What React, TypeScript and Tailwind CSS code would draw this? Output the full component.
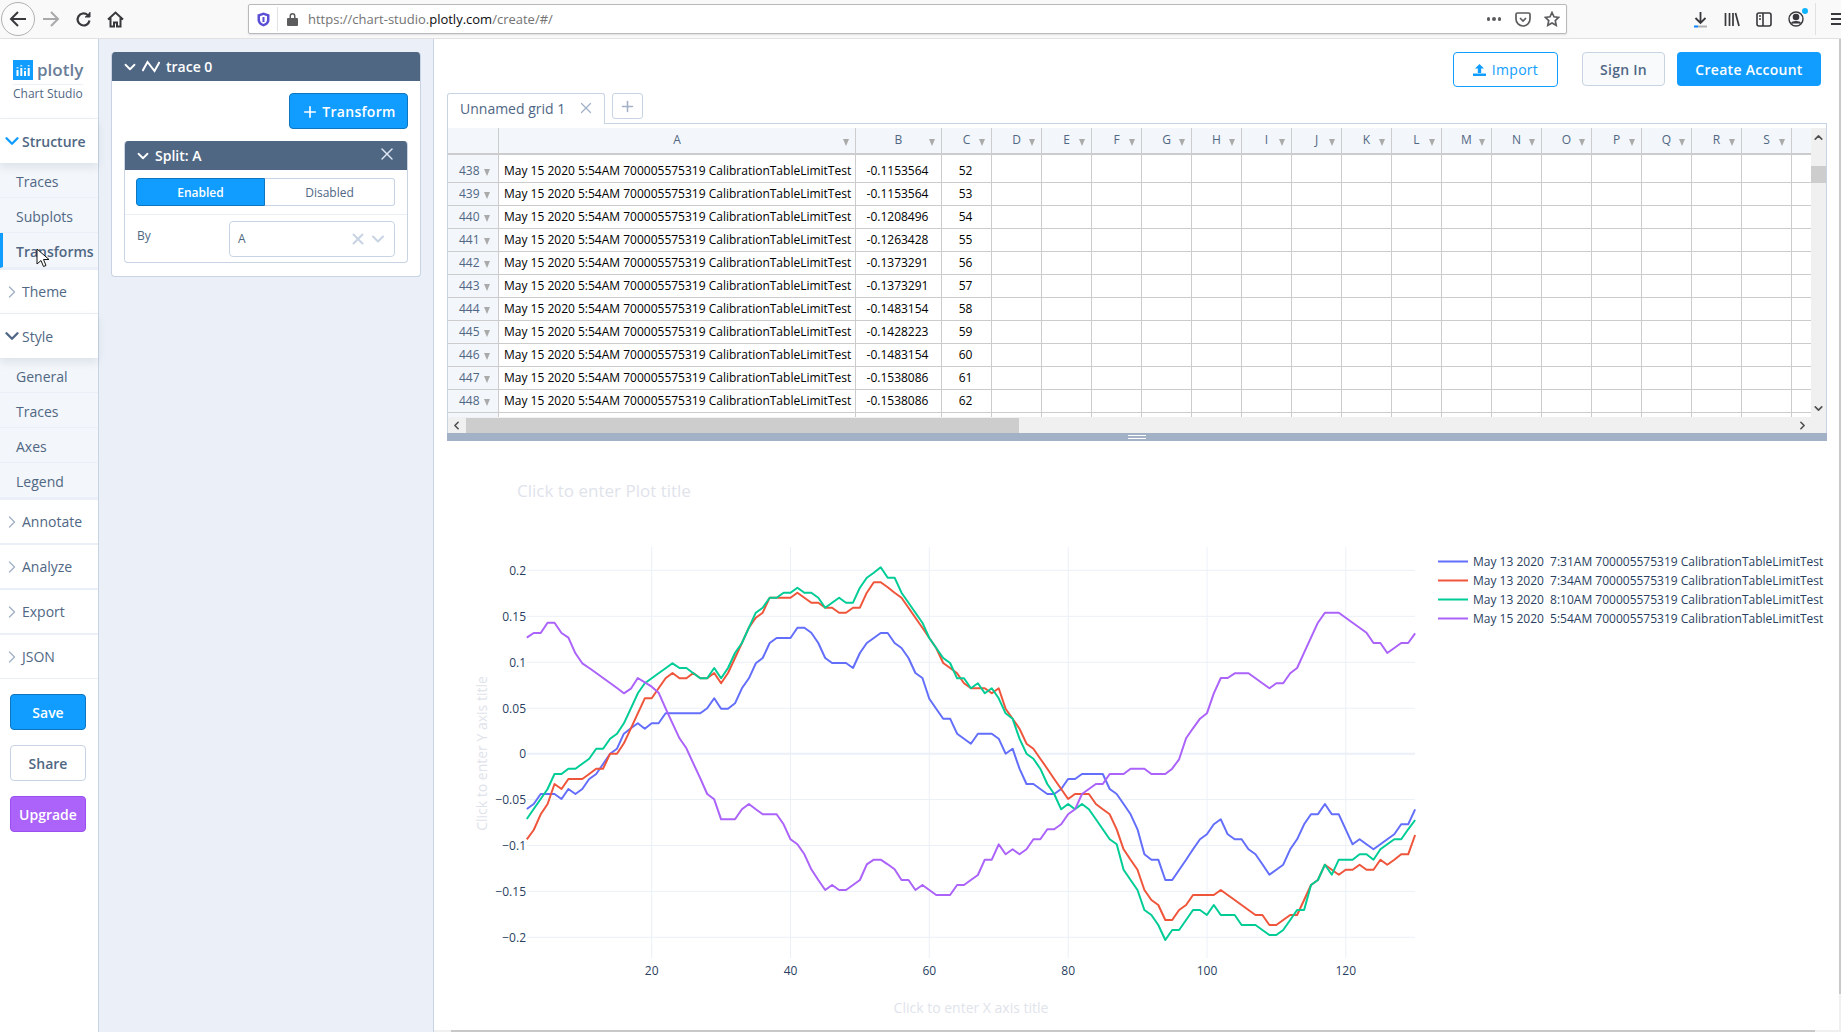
import { ChevronDown, ChevronRight, ChevronUp, ChevronLeft, X, Plus } from 'lucide-react';

const blueLine = [837,822,792,792,792,807,777,792,777,747,732,702,671,656,611,595,580,596,580,580,550,550,550,550,550,550,535,505,536,536,520,475,445,400,384,339,324,324,324,293,293,308,339,384,399,399,399,414,369,339,324,309,309,339,354,384,429,444,506,536,566,566,611,626,641,611,611,611,626,671,656,716,762,762,777,792,792,777,747,747,732,732,732,732,777,792,822,853,898,973,989,989,1050,1050,1020,989,958,928,913,883,868,913,928,928,958,973,1003,1034,1019,1004,958,928,883,853,853,822,853,853,898,943,928,943,958,943,928,913,883,883,838];
const redLine = [928,900,853,822,762,777,747,747,747,732,716,716,671,671,640,595,550,505,505,475,445,429,445,445,429,445,445,429,460,429,384,339,293,263,248,203,203,203,203,188,203,218,218,233,233,248,248,233,233,188,157,157,172,188,203,233,263,293,324,354,399,414,430,460,475,475,475,490,475,536,566,596,641,656,686,716,747,777,807,792,792,792,822,838,853,898,958,989,1019,1080,1110,1125,1170,1170,1140,1125,1095,1095,1095,1095,1080,1095,1110,1125,1140,1155,1155,1185,1185,1170,1155,1155,1110,1065,1050,1004,1019,1034,1019,1019,1004,1019,1019,989,1004,989,973,973,915];
const greenLine = [867,837,807,777,732,732,716,716,701,686,656,656,626,611,580,535,490,460,445,430,415,400,414,414,430,445,445,414,445,414,369,339,293,248,233,203,203,188,188,173,188,188,203,233,218,203,218,218,173,143,128,112,143,143,188,218,248,278,324,354,384,399,445,445,475,460,490,475,505,550,566,626,671,686,716,762,792,838,822,838,822,838,868,898,928,943,1019,1050,1080,1140,1155,1185,1230,1200,1200,1170,1140,1140,1155,1125,1155,1155,1155,1185,1185,1185,1200,1215,1215,1200,1170,1140,1140,1065,1050,1004,1034,989,989,989,973,973,989,958,943,928,928,898,870];
const purpleLine = [323,309,309,278,278,309,323,370,400,414,429,444,459,474,490,476,444,457,470,488,535,580,625,655,700,745,792,808,868,868,868,838,822,838,853,853,853,883,928,943,973,1018,1050,1080,1065,1080,1080,1065,1050,1003,989,989,1003,1018,1050,1050,1080,1065,1080,1095,1095,1095,1065,1065,1050,1035,989,989,943,973,958,973,958,928,928,898,898,883,853,838,792,777,762,762,732,732,732,716,716,716,732,732,732,716,688,625,595,566,550,490,444,444,430,430,430,445,460,475,460,460,430,414,368,323,278,248,248,248,263,278,293,308,339,339,369,354,339,339,310];

const series = [
  { color: '#636efa', data: blueLine, label: 'May 13 2020  7:31AM 700005575319 CalibrationTableLimitTest' },
  { color: '#ef553b', data: redLine, label: 'May 13 2020  7:34AM 700005575319 CalibrationTableLimitTest' },
  { color: '#00cc96', data: greenLine, label: 'May 13 2020  8:10AM 700005575319 CalibrationTableLimitTest' },
  { color: '#ab63fa', data: purpleLine, label: 'May 15 2020  5:54AM 700005575319 CalibrationTableLimitTest' },
];

const gridRows = [
  ['438', '-0.1153564', '52'],
  ['439', '-0.1153564', '53'],
  ['440', '-0.1208496', '54'],
  ['441', '-0.1263428', '55'],
  ['442', '-0.1373291', '56'],
  ['443', '-0.1373291', '57'],
  ['444', '-0.1483154', '58'],
  ['445', '-0.1428223', '59'],
  ['446', '-0.1483154', '60'],
  ['447', '-0.1538086', '61'],
  ['448', '-0.1538086', '62'],
];

const emptyCols = ['D', 'E', 'F', 'G', 'H', 'I', 'J', 'K', 'L', 'M', 'N', 'O', 'P', 'Q', 'R', 'S'];

const yTicks = [
  { v: '0.2', y: 570.3 },
  { v: '0.15', y: 616.3 },
  { v: '0.1', y: 662.3 },
  { v: '0.05', y: 708.2 },
  { v: '0', y: 753.7 },
  { v: '−0.05', y: 799.6 },
  { v: '−0.1', y: 845.5 },
  { v: '−0.15', y: 891.4 },
  { v: '−0.2', y: 937.3 },
];
const xTicks = [
  { v: '20', x: 651.7 },
  { v: '40', x: 790.5 },
  { v: '60', x: 929.3 },
  { v: '80', x: 1068.2 },
  { v: '100', x: 1207 },
  { v: '120', x: 1345.8 },
];

function linePoints(data: number[]) {
  return data.map((y, i) => `${(651.7 + (i - 18) * 6.94).toFixed(1)},${(530 + y / 3).toFixed(1)}`).join(' ');
}

function Caret() {
  return <span className="inline-block w-0 h-0 border-x-[3.5px] border-x-transparent border-t-[7px] border-t-[#aaaaaa]" />;
}

function SideHeader({ label, open, active, bold, tight }: { label: string; open?: boolean; active?: boolean; bold?: boolean; tight?: boolean }) {
  return (
    <div className={`flex items-center bg-white text-[14px] text-[#506784] ${open ? 'h-[44px] relative shadow-[0_4px_8px_rgba(80,103,132,0.14)]' : tight ? 'h-[44px] border-b border-[#ebf0f8]' : 'h-[45px] border-b-2 border-[#ebf0f8]'} ${bold ? 'font-semibold' : ''}`}>
      <span className="w-[22px] flex justify-center pl-[1px]">
        {open ? (
          <ChevronDown size={22} strokeWidth={2.6} className={`shrink-0 ${active ? 'text-[#119dff]' : 'text-[#506784]'}`} />
        ) : (
          <ChevronRight size={20} strokeWidth={1.6} className="shrink-0 text-[#a2b1c6]" />
        )}
      </span>
      {label}
    </div>
  );
}

function SideItem({ label, active }: { label: string; active?: boolean }) {
  return (
    <div className={`h-[35px] flex items-center pt-[2px] pl-4 text-[14px] text-[#506784] bg-[#f3f6fa] border-b border-[#ebf0f8] ${active ? 'border-l-[3px] border-l-[#119dff] pl-[13px] font-semibold' : ''}`}>
      {label}
    </div>
  );
}

function BrowserBar() {
  return (
    <div className="h-[39px] flex items-center bg-[#f9f9fa] border-b border-[#e1e1e2] shrink-0 text-[#4a4a4f]">
      <div className="ml-[1px] w-[34px] h-[34px] rounded-full border border-[#b1b1b3] bg-[#fbfbfb] flex items-center justify-center shrink-0">
        <svg width="18" height="18" viewBox="0 0 18 18" fill="none" stroke="#38383d" strokeWidth="2"><path d="M17 9H2M9 2 2 9l7 7" /></svg>
      </div>
      <svg className="ml-[7px] shrink-0" width="18" height="18" viewBox="0 0 18 18" fill="none" stroke="#a9a9ab" strokeWidth="2"><path d="M1 9h15M9 2l7 7-7 7" /></svg>
      <svg className="ml-[15px] shrink-0" width="17" height="17" viewBox="0 0 17 17" fill="none" stroke="#38383d" strokeWidth="2.2"><path d="M14.5 9.5A6 6 0 1 1 12.6 4" /><path d="M15 1v5h-5" fill="#38383d" strokeWidth="1" /></svg>
      <svg className="ml-[15px] shrink-0" width="17" height="17" viewBox="0 0 17 17" fill="none" stroke="#38383d" strokeWidth="2"><path d="M1 8.5 8.5 1.5 16 8.5M3.5 7v8.5h3.5v-4h3v4h3.500V7" /></svg>
      <div className="ml-[124px] w-[1319px] h-[30px] shrink-0 bg-white border border-[#b9b9bb] rounded-[2px] flex items-center shadow-[0_1px_2px_rgba(0,0,0,0.1)]">
        <svg className="ml-[8px]" width="13" height="15" viewBox="0 0 13 15"><path d="M6.500 .5 12.500 2.500V8c0 3.500-3 5.500-6 6.500-3-1-6-3-6-6.500V2.500Z" fill="#5b4fd6" /><path d="M6.500 3 10 4.200V8c0 2-1.700 3.300-3.500 4-1.800-.7-3.500-2-3.500-4V4.200Z" fill="#fff" /><rect x="5.500" y="5" width="2" height="5" fill="#5b4fd6" /></svg>
        <span className="ml-[7px] w-px h-[24px] bg-[#e1e1e2]" />
        <svg className="ml-[8px]" width="13" height="14" viewBox="0 0 13 14" fill="#5c5c5f"><path d="M3.500 6V4a3 3 0 0 1 6 0v2H8V4a1.500 1.500 0 0 0-3 0v2Z" /><rect x="1" y="6" width="11" height="8" rx="1" /></svg>
        <span className="ml-[9px] pt-[1px] text-[13px] text-[#737373]">
          https://chart-studio.<span className="text-[#0c0c0d]">plotly.com</span>/create/#/
        </span>
        <div className="ml-auto flex items-center gap-[13px] pr-[6px]">
          <span className="flex gap-[2px] mr-[1px]">
            <span className="w-[3.500px] h-[3.500px] rounded-full bg-[#5c5c5f]" />
            <span className="w-[3.500px] h-[3.500px] rounded-full bg-[#5c5c5f]" />
            <span className="w-[3.500px] h-[3.500px] rounded-full bg-[#5c5c5f]" />
          </span>
          <svg width="16" height="15" viewBox="0 0 16 15" fill="none" stroke="#5c5c5f" strokeWidth="1.700"><path d="M1 2.500A1.500 1.500 0 0 1 2.500 1h11A1.500 1.500 0 0 1 15 2.500V7a7 7 0 0 1-14 0Z" /><path d="m5 6 3 3 3-3" /></svg>
          <svg width="16" height="16" viewBox="0 0 16 16" fill="none" stroke="#5c5c5f" strokeWidth="1.700"><path d="m8 1.500 2 4.300 4.700.6-3.400 3.200.9 4.700L8 12l-4.200 2.300.9-4.700L1.300 6.400 6 5.800Z" /></svg>
        </div>
      </div>
      <div className="ml-[126px] flex items-center shrink-0">
        <svg width="15" height="17" viewBox="0 0 15 17" fill="none"><path d="M7.500 1v10M2.500 7l5 5 5-5" stroke="#38383d" strokeWidth="1.800" /><path d="M1 15.500h4" stroke="#0a84ff" strokeWidth="2" /><path d="M5 15.500h9" stroke="#b1b1b3" strokeWidth="2" /></svg>
        <svg className="ml-[16px]" width="16" height="15" viewBox="0 0 16 15" fill="none" stroke="#38383d" strokeWidth="1.700"><path d="M1.500 1v13M5.500 1v13M9 1v13M11.500 1l3.500 13" /></svg>
        <svg className="ml-[16px]" width="16" height="15" viewBox="0 0 16 15" fill="none" stroke="#38383d" strokeWidth="1.600"><rect x="1" y="1" width="14" height="13" rx="2" /><path d="M7 1v13" /><path d="M3 4h2M3 7h2" /></svg>
        <div className="relative ml-[16px]">
          <svg width="16" height="16" viewBox="0 0 16 16" fill="none" stroke="#38383d" strokeWidth="1.400"><circle cx="8" cy="8" r="7" /><circle cx="8" cy="6" r="2.600" fill="#38383d" /><path d="M3.500 12.500c1-2.500 8-2.500 9 0" fill="#38383d" /></svg>
          <span className="absolute -top-[3px] -right-[4px] w-[6px] h-[6px] rounded-full bg-[#0fb4ff]" />
        </div>
        <span className="ml-[11px] w-px h-[32px] bg-[#e1e1e2]" />
        <div className="ml-[15px] flex flex-col gap-[3px]">
          <span className="w-[12px] h-[2px] bg-[#38383d]" />
          <span className="w-[12px] h-[2px] bg-[#38383d]" />
          <span className="w-[12px] h-[2px] bg-[#38383d]" />
        </div>
      </div>
    </div>
  );
}

function Sidebar() {
  return (
    <aside className="relative w-[99px] shrink-0 bg-white border-r border-[#c8d4e3] flex flex-col">
      <div className="h-[80px] pt-[21px] pl-[13px] border-b border-[#ebf0f8]">
        <div className="flex items-center w-[70px] h-[20px] border-b border-[#ebf0f8] pb-[4px] box-content">
          <svg width="20" height="20" viewBox="0 0 20 20" className="shrink-0">
            <rect width="20" height="20" fill="#119dff" />
            <g fill="#fff">
              <rect x="3.500" y="10" width="2" height="6" />
              <rect x="7.300" y="8" width="2" height="8" />
              <rect x="11" y="11" width="2" height="5" />
              <rect x="14.700" y="8" width="2" height="8" />
              <rect x="3.500" y="7" width="2" height="1.500" opacity=".7" />
              <rect x="7.300" y="5" width="2" height="1.500" opacity=".7" />
              <rect x="11" y="8" width="2" height="1.500" opacity=".7" />
              <rect x="14.700" y="5" width="2" height="1.500" opacity=".7" />
            </g>
          </svg>
          <span className="ml-[4px] text-[17px] leading-[20px] font-semibold text-[#6b7d97]">plotly</span>
        </div>
        <div className="mt-[1px] text-[12px] leading-[16px] text-[#506784] whitespace-nowrap">Chart Studio</div>
      </div>
      <SideHeader label="Structure" open active bold />
      <SideItem label="Traces" />
      <SideItem label="Subplots" />
      <SideItem label="Transforms" active />
      <div className="h-[2px] bg-[#ebf0f8]" />
      <SideHeader label="Theme" tight />
      <SideHeader label="Style" open />
      <SideItem label="General" />
      <SideItem label="Traces" />
      <SideItem label="Axes" />
      <SideItem label="Legend" />
      <div className="h-[2px] bg-[#ebf0f8]" />
      <SideHeader label="Annotate" />
      <SideHeader label="Analyze" />
      <SideHeader label="Export" />
      <SideHeader label="JSON" tight />
      <div className="mt-[15px] pl-[10px] flex flex-col items-start gap-[15px] text-[14px] font-semibold">
        <button className="w-[76px] h-[36px] rounded-[4px] bg-[#119dff] border border-[#0d76bf] text-white">Save</button>
        <button className="w-[76px] h-[36px] rounded-[4px] bg-white border border-[#c8d4e3] text-[#506784]">Share</button>
        <button className="w-[76px] h-[36px] rounded-[4px] bg-[#ab63fa] border border-[#9b4ff0] text-white">Upgrade</button>
      </div>
      {/* mouse pointer */}
      <svg className="absolute left-[36px] top-[209px]" width="14" height="20" viewBox="0 0 14 20"><path d="M1 1v15l4-3.500 2.500 6 2.500-1-2.500-6H13Z" fill="#fff" stroke="#111" strokeWidth="1" /></svg>
    </aside>
  );
}

function TracePanel() {
  return (
    <div className="w-[335px] shrink-0 bg-[#ebf0f8] border-r border-[#c8d4e3] pt-[13px] px-[12px]">
      <div className="h-[225px] bg-white rounded-[4px] border-x border-b border-[#c8d4e3] overflow-hidden">
        <div className="h-[29px] -mx-px bg-[#506784] text-white text-[14px] font-semibold flex items-center pl-[10px]">
          <ChevronDown size={18} strokeWidth={2.4} />
          <svg className="ml-[3px] mr-[6px]" width="18" height="13" viewBox="0 0 18 13" fill="none" stroke="#fff" strokeWidth="2"><path d="M0.500 11 5.500 2l7 9 5-9" /></svg>
          trace 0
        </div>
        <div className="flex justify-end pt-[12px] pr-[12px]">
          <button className="w-[119px] h-[36px] pt-[1px] rounded-[4px] bg-[#119dff] border border-[#0d76bf] text-white text-[14px] font-semibold tracking-[0.02em] flex items-center justify-center gap-[3px]">
            <Plus size={18} strokeWidth={2.2} />
            Transform
          </button>
        </div>
        <div className="mt-[12px] mx-[12px] h-[122px] rounded-[4px] border-x border-b border-[#c8d4e3] overflow-hidden">
          <div className="h-[29px] -mx-px bg-[#506784] text-white text-[14px] font-semibold flex items-center pl-[10px] pr-[11px]">
            <ChevronDown size={18} strokeWidth={2.4} />
            <span className="ml-[3px]">Split: A</span>
            <X size={20} strokeWidth={1.7} className="ml-auto text-[#dfe8f3] -mt-[3px]" />
          </div>
          <div className="h-[44px] mt-[1px] px-[11px] pt-[7px] border-b border-[#ebf0f8]">
            <div className="flex h-[28px] text-[12px] rounded-[3px] overflow-hidden">
              <div className="w-[129px] pt-[1px] bg-[#119dff] border border-[#0d76bf] text-white font-semibold flex items-center justify-center rounded-l-[3px]">Enabled</div>
              <div className="w-[130px] pt-[1px] bg-white border border-l-0 border-[#c8d4e3] text-[#506784] flex items-center justify-center rounded-r-[3px]">Disabled</div>
            </div>
          </div>
          <div className="flex pl-[12px] pr-[12px] pt-[6px]">
            <span className="w-[92px] text-[12px] text-[#506784] pt-[6px]">By</span>
            <div className="w-[166px] h-[36px] rounded-[4px] border border-[#c8d4e3] flex items-center pl-[8px] text-[12px] text-[#506784]">
              A
              <X size={18} strokeWidth={2.6} className="ml-auto text-[#c8d4e3]" />
              <ChevronDown size={20} strokeWidth={2.4} className="ml-[1px] mr-[6px] text-[#c8d4e3]" />
            </div>
          </div>
        </div>
      </div>
    </div>
  );
}

function TopActions() {
  return (
    <div className="flex justify-end items-start pt-[13px] pr-[20px] h-[54px] text-[14px] tracking-[0.02em] shrink-0">
      <button className="w-[105px] h-[35px] rounded-[4px] border border-[#119dff] bg-white text-[#119dff] flex items-center justify-center gap-[6px]">
        <svg width="13" height="12" viewBox="0 0 13 12" fill="#119dff"><path d="M6.500 0 11 4.500H8.200V9H4.800V4.500H2Z" /><rect x="0" y="9.500" width="13" height="2.500" /></svg>
        Import
      </button>
      <button className="ml-[24px] w-[83px] h-[34px] rounded-[4px] border border-[#c8d4e3] bg-[#f8fafc] text-[#506784] font-semibold">Sign In</button>
      <button className="ml-[12px] w-[144px] h-[34px] rounded-[4px] bg-[#119dff] text-white font-semibold">Create Account</button>
    </div>
  );
}

function DataGrid() {
  return (
    <div className="ml-[13px] w-[1380px] shrink-0">
      <div className="flex items-start h-[30px]">
        <div className="w-[158px] h-[31px] pb-[2px] relative z-10 bg-white border border-b-0 border-[#c8d4e3] rounded-t-[3px] flex items-center pl-[12px] text-[14px] text-[#506784]">
          Unnamed grid 1
          <X size={18} strokeWidth={1.6} className="ml-[12px] text-[#a2b1c6]" />
        </div>
        <div className="ml-[7px] w-[31px] h-[26px] rounded-[3px] border border-[#c8d4e3] flex items-center justify-center">
          <Plus size={17} strokeWidth={2.2} className="text-[#a2b1c6]" />
        </div>
      </div>
      <div className="h-[318px] border border-b-0 border-[#c8d4e3] flex flex-col">
        <div className="h-[293px] flex pt-[4px]">
          <div className="w-[1364px] overflow-hidden text-[12px]">
            <div className="flex h-[27px] bg-[#f3f6fa] border-b-2 border-[#cccccc] text-[#506784]">
              <div className="w-[51px] shrink-0 border-r border-[#cccccc]" />
              <HeaderCell label="A" width="w-[357px]" />
              <HeaderCell label="B" width="w-[86px]" />
              <HeaderCell label="C" width="w-[50px]" />
              {emptyCols.map((c) => (
                <HeaderCell key={c} label={c} width="w-[50px]" />
              ))}
            </div>
            <BlankRow height="h-[5px]" />
            {gridRows.map((r) => (
              <div key={r[0]} className="flex h-[23px] border-b border-[#cccccc] text-black">
                <div className="w-[51px] shrink-0 bg-[#f3f6fa] border-r border-[#cccccc] flex items-center pl-[11px] text-[#506784]">
                  {r[0]}
                  <span className="ml-[4px] mt-[3px] inline-flex"><Caret /></span>
                </div>
                <div className="w-[357px] shrink-0 border-r border-[#cccccc] flex items-center pl-[5px] whitespace-nowrap overflow-hidden">
                  May 15 2020 5:54AM 700005575319 CalibrationTableLimitTest
                </div>
                <div className="w-[86px] shrink-0 border-r border-[#cccccc] flex items-center justify-center pr-[2px]">{r[1]}</div>
                <div className="w-[50px] shrink-0 border-r border-[#cccccc] flex items-center justify-center pr-[2px]">{r[2]}</div>
                {emptyCols.map((c) => (
                  <div key={c} className="w-[50px] shrink-0 border-r border-[#cccccc]" />
                ))}
              </div>
            ))}
            <BlankRow height="h-[4px]" />
          </div>
          <div className="w-[15px] bg-[#f0f0f0] flex flex-col items-center">
            <ChevronUp size={13} strokeWidth={3} className="text-[#505050] mt-[3px]" />
            <div className="mt-[22px] w-full h-[17px] bg-[#cdcdcd]" />
            <ChevronDown size={13} strokeWidth={3} className="text-[#505050] mt-auto mb-[2px]" />
          </div>
        </div>
        <div className="h-[16px] flex items-center bg-[#f0f0f0]">
          <ChevronLeft size={13} strokeWidth={3} className="text-[#505050] ml-[2px]" />
          <div className="ml-[3px] w-[553px] h-[15px] bg-[#cdcdcd]" />
          <ChevronRight size={13} strokeWidth={3} className="text-[#505050] ml-auto mr-[17px]" />
        </div>
        <div className="h-[8px] bg-[#a2b1c6] -mx-px flex flex-col items-center justify-center gap-[2px]">
          <span className="w-[18px] h-px bg-white" />
          <span className="w-[18px] h-px bg-white" />
        </div>
      </div>
    </div>
  );
}

function HeaderCell({ label, width }: { label: string; width: string }) {
  return (
    <div className={`${width} shrink-0 border-r border-[#cccccc] relative flex justify-center pt-[3px]`}>
      {label}
      <span className="absolute right-[6px] top-[11px] inline-flex"><Caret /></span>
    </div>
  );
}

function BlankRow({ height }: { height: string }) {
  return (
    <div className={`flex ${height} border-b-0`}>
      <div className="w-[51px] shrink-0 bg-[#f3f6fa] border-r border-[#cccccc]" />
      <div className="w-[357px] shrink-0 border-r border-[#cccccc]" />
      <div className="w-[86px] shrink-0 border-r border-[#cccccc]" />
      <div className="w-[50px] shrink-0 border-r border-[#cccccc]" />
      {emptyCols.map((c) => (
        <div key={c} className="w-[50px] shrink-0 border-r border-[#cccccc]" />
      ))}
    </div>
  );
}

function Chart() {
  return (
    <svg width="1407" height="591" viewBox="434 441 1407 591" className="block shrink-0" fontFamily="'Open Sans', sans-serif">
      <text x="517" y="497" fontSize="17" fill="#dfe3eb">Click to enter Plot title</text>
      {xTicks.map((t) => (
        <line key={t.v} x1={t.x} x2={t.x} y1="547" y2="958" stroke="#ebf0f8" />
      ))}
      {yTicks.map((t) => (
        <line key={t.v} x1="527" x2="1415" y1={t.y} y2={t.y} stroke="#ebf0f8" strokeWidth={t.v === '0' ? 2 : 1} />
      ))}
      {series.map((s) => (
        <polyline key={s.color} points={linePoints(s.data)} fill="none" stroke={s.color} strokeWidth="2" strokeLinejoin="round" />
      ))}
      {yTicks.map((t) => (
        <text key={t.v} x="526" y={t.y + 4.500} textAnchor="end" fontSize="12" fill="#2a3f5f">{t.v}</text>
      ))}
      {xTicks.map((t) => (
        <text key={t.v} x={t.x} y="974.500" textAnchor="middle" fontSize="12" fill="#2a3f5f">{t.v}</text>
      ))}
      <text x="971" y="1013" textAnchor="middle" fontSize="14" fill="#dfe3eb">Click to enter X axis title</text>
      <text transform="translate(487 753.500) rotate(-90)" textAnchor="middle" fontSize="14" fill="#dfe3eb">Click to enter Y axis title</text>
      {series.map((s, i) => (
        <g key={s.label}>
          <line x1="1438" x2="1468" y1={561.500 + i * 19} y2={561.500 + i * 19} stroke={s.color} strokeWidth="2" />
          <text x="1473" y={566 + i * 19} fontSize="12" fill="#2a3f5f" xmlSpace="preserve">{s.label}</text>
        </g>
      ))}
    </svg>
  );
}

export default function App() {
  return (
    <div className="w-[1841px] h-[1032px] overflow-hidden bg-white flex flex-col font-['Open_Sans',sans-serif]">
      <BrowserBar />
      <div className="flex flex-1 min-h-0">
        <Sidebar />
        <TracePanel />
        <main className="relative flex-1 min-w-0 flex flex-col">
          <TopActions />
          <DataGrid />
          <Chart />
          {/* page scrollbars along the edges */}
          <div className="absolute right-0 top-0 bottom-0 w-[2px] bg-[#f0f0f0]">
            <div className="h-[955px] bg-[#c8c8c8]" />
          </div>
          <div className="absolute left-0 right-[2px] bottom-0 h-[2px] bg-[#f0f0f0]">
            <div className="ml-[17px] w-[1364px] h-[2px] bg-[#c8c8c8]" />
          </div>
        </main>
      </div>
    </div>
  );
}
